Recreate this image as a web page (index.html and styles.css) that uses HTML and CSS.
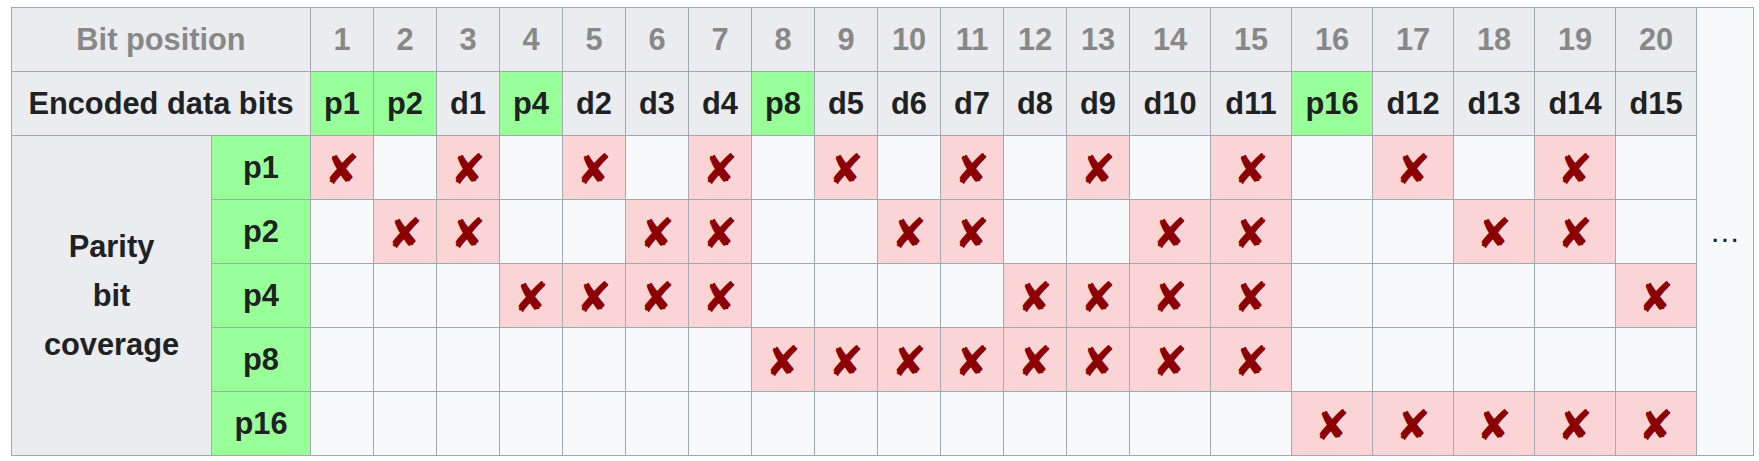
FILE: index.html
```html
<!DOCTYPE html>
<html lang="en">
<head>
<meta charset="utf-8">
<title>Hamming code parity bit coverage</title>
<link rel="stylesheet" href="styles.css">
</head>
<body>
<table class="coverage">
  <colgroup>
    <col class="c-label">
    <col class="c-parity">
    <col class="c-n"><col class="c-n"><col class="c-n"><col class="c-n"><col class="c-n"><col class="c-n"><col class="c-n"><col class="c-n"><col class="c-n"><col class="c-n"><col class="c-n"><col class="c-n"><col class="c-n">
    <col class="c-w"><col class="c-w"><col class="c-w"><col class="c-w"><col class="c-w"><col class="c-w"><col class="c-w">
    <col class="c-more">
  </colgroup>
  <tr class="pos">
    <th colspan="2">Bit position</th>
    <th>1</th><th>2</th><th>3</th><th>4</th><th>5</th><th>6</th><th>7</th><th>8</th><th>9</th><th>10</th>
    <th>11</th><th>12</th><th>13</th><th>14</th><th>15</th><th>16</th><th>17</th><th>18</th><th>19</th><th>20</th>
    <td rowspan="7" class="more">…</td>
  </tr>
  <tr>
    <th colspan="2">Encoded data bits</th>
    <th class="p">p1</th><th class="p">p2</th><th>d1</th><th class="p">p4</th><th>d2</th><th>d3</th><th>d4</th><th class="p">p8</th><th>d5</th><th>d6</th>
    <th>d7</th><th>d8</th><th>d9</th><th>d10</th><th>d11</th><th class="p">p16</th><th>d12</th><th>d13</th><th>d14</th><th>d15</th>
  </tr>
  <tr>
    <th rowspan="5" class="group">Parity<br>bit<br>coverage</th>
    <th class="p">p1</th>
    <td class="x">✘</td><td></td><td class="x">✘</td><td></td><td class="x">✘</td><td></td><td class="x">✘</td><td></td><td class="x">✘</td><td></td>
    <td class="x">✘</td><td></td><td class="x">✘</td><td></td><td class="x">✘</td><td></td><td class="x">✘</td><td></td><td class="x">✘</td><td></td>
  </tr>
  <tr>
    <th class="p">p2</th>
    <td></td><td class="x">✘</td><td class="x">✘</td><td></td><td></td><td class="x">✘</td><td class="x">✘</td><td></td><td></td><td class="x">✘</td>
    <td class="x">✘</td><td></td><td></td><td class="x">✘</td><td class="x">✘</td><td></td><td></td><td class="x">✘</td><td class="x">✘</td><td></td>
  </tr>
  <tr>
    <th class="p">p4</th>
    <td></td><td></td><td></td><td class="x">✘</td><td class="x">✘</td><td class="x">✘</td><td class="x">✘</td><td></td><td></td><td></td>
    <td></td><td class="x">✘</td><td class="x">✘</td><td class="x">✘</td><td class="x">✘</td><td></td><td></td><td></td><td></td><td class="x">✘</td>
  </tr>
  <tr>
    <th class="p">p8</th>
    <td></td><td></td><td></td><td></td><td></td><td></td><td></td><td class="x">✘</td><td class="x">✘</td><td class="x">✘</td>
    <td class="x">✘</td><td class="x">✘</td><td class="x">✘</td><td class="x">✘</td><td class="x">✘</td><td></td><td></td><td></td><td></td><td></td>
  </tr>
  <tr>
    <th class="p">p16</th>
    <td></td><td></td><td></td><td></td><td></td><td></td><td></td><td></td><td></td><td></td>
    <td></td><td></td><td></td><td></td><td></td><td class="x">✘</td><td class="x">✘</td><td class="x">✘</td><td class="x">✘</td><td class="x">✘</td>
  </tr>
</table>
</body>
</html>
```

FILE: styles.css
```css
html, body {
  margin: 0;
  padding: 0;
  background: #ffffff;
}

body {
  padding: 7px 0 0 11px;
}

.coverage {
  border-collapse: collapse;
  table-layout: fixed;
  width: 1742px;
  font-family: "Liberation Sans", Arial, sans-serif;
  font-size: 30.8px;
  line-height: 1.6;
  color: #202122;
  background: #f8f9fa;
  border: 1px solid #a2a9b1;
}

.c-label { width: 200px; }
.c-parity { width: 99px; }
.c-n { width: 63px; }
.c-w { width: 81px; }
.c-more { width: 57px; }

.coverage th,
.coverage td {
  border: 1px solid #a2a9b1;
  padding: 0 12px;
  height: 63px;
  text-align: center;
  vertical-align: middle;
  white-space: nowrap;
}

.coverage th {
  background: #eaecf0;
  font-weight: bold;
}

.coverage .pos th {
  color: #888888;
}

.coverage th.p {
  background: #9f9;
}

.coverage td {
  background: #f8f9fa;
}

.coverage td.x {
  background: #fbd5d5;
  color: #8b0000;
  font-family: "DejaVu Sans", sans-serif;
  font-size: 42px;
  line-height: 1;
  height: 59px;
  padding: 4px 0 0;
}

.coverage td.more {
  font-weight: normal;
  background: #f8f9fa;
}
```
